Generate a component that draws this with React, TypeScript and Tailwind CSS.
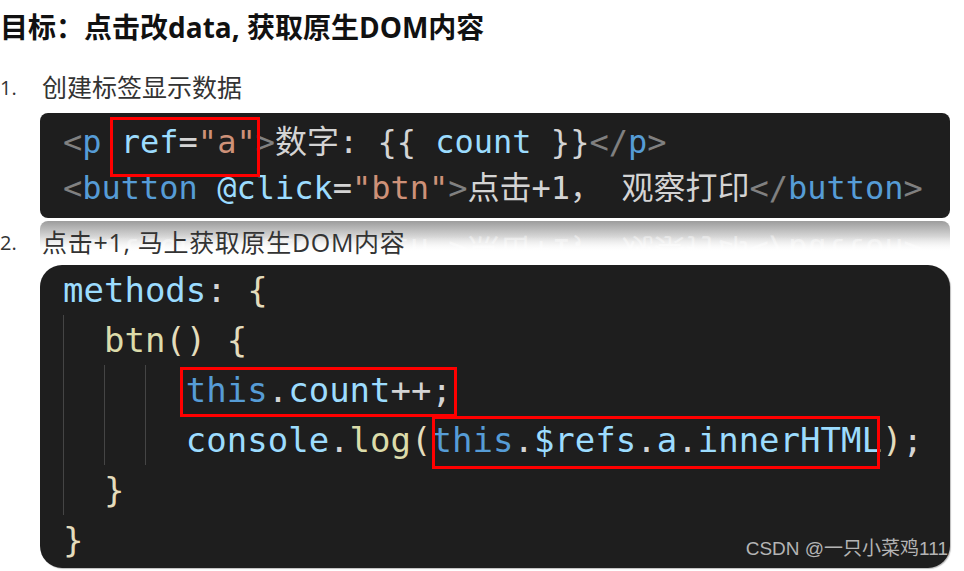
import React from "react";

const mono = "font-['DejaVu_Sans_Mono','Noto_Sans_CJK_SC',monospace]";
const sans = "font-['Open_Sans','Noto_Sans_CJK_SC',sans-serif]";

const Guide = () => (
  <span className="inline-block w-[2ch] h-[50px] align-top border-l border-[#454545]" />
);

const Box = ({ className }: { className: string }) => (
  <div className={`absolute border-[3px] border-[#ff0000] ${className}`} />
);

const TemplateLine2 = () => (
  <>
    <span className="text-[#808080]">&lt;</span>
    <span className="text-[#569cd6]">button</span>{" "}
    <span className="text-[#9cdcfe]">@click</span>
    <span className="text-[#d4d4d4]">=</span>
    <span className="text-[#ce9178]">"btn"</span>
    <span className="text-[#808080]">&gt;</span>
    <span className="text-[#d4d4d4]">点击+1， 观察打印</span>
    <span className="text-[#808080]">&lt;/</span>
    <span className="text-[#569cd6]">button</span>
    <span className="text-[#808080]">&gt;</span>
  </>
);

export const TemplateBlock = () => {
  return (
    <div className={`relative ml-[40px] w-[910px] h-[105px] rounded-[8px] bg-[#1e1e1e] pl-[23px] pt-[6px] text-[32px] leading-[46px] whitespace-pre ${mono}`}>
      <div>
        <span className="text-[#808080]">&lt;</span>
        <span className="text-[#569cd6]">p</span>{" "}
        <span className="text-[#9cdcfe]">ref</span>
        <span className="text-[#d4d4d4]">=</span>
        <span className="text-[#ce9178]">"a"</span>
        <span className="text-[#808080]">&gt;</span>
        <span className="text-[#d4d4d4]">数字: {"{{ "}</span>
        <span className="text-[#9cdcfe]">count</span>
        <span className="text-[#d4d4d4]">{" }}"}</span>
        <span className="text-[#808080]">&lt;/</span>
        <span className="text-[#569cd6]">p</span>
        <span className="text-[#808080]">&gt;</span>
      </div>
      <div>
        <TemplateLine2 />
      </div>
      <Box className="left-[70px] top-[4px] w-[150px] h-[60px]" />
    </div>
  );
};

export const MethodsBlock = () => {
  const brace = "text-[#e4dcbc]";
  return (
    <div className={`relative ml-[40px] w-[910px] h-[303px] rounded-[22px] bg-[#1e1e1e] pl-[23px] text-[34px] leading-[50px] whitespace-pre shadow-[1px_1px_1px_#bdbdbd] ${mono}`}>
      <div>
        <span className="text-[#9cdcfe]">methods</span>
        <span className="text-[#d4d4d4]">: </span>
        <span className={brace}>{"{"}</span>
      </div>
      <div>
        <Guide />
        <span className="text-[#dcdcaa]">btn</span>
        <span className={brace}>() {"{"}</span>
      </div>
      <div>
        <Guide />
        <Guide />
        <Guide />
        <span className="text-[#569cd6]">this</span>
        <span className="text-[#d4d4d4]">.</span>
        <span className="text-[#9cdcfe]">count</span>
        <span className="text-[#d4d4d4]">++;</span>
      </div>
      <div>
        <Guide />
        <Guide />
        <Guide />
        <span className="text-[#9cdcfe]">console</span>
        <span className="text-[#d4d4d4]">.</span>
        <span className="text-[#dcdcaa]">log</span>
        <span className={brace}>(</span>
        <span className="text-[#569cd6]">this</span>
        <span className="text-[#d4d4d4]">.</span>
        <span className="text-[#9cdcfe]">$refs</span>
        <span className="text-[#d4d4d4]">.</span>
        <span className="text-[#9cdcfe]">a</span>
        <span className="text-[#d4d4d4]">.</span>
        <span className="text-[#9cdcfe]">innerHTML</span>
        <span className={brace}>)</span>
        <span className="text-[#d4d4d4]">;</span>
      </div>
      <div>
        <Guide />
        <span className={brace}>{"}"}</span>
      </div>
      <div>
        <span className={brace}>{"}"}</span>
      </div>
      <Box className="left-[140px] top-[102px] w-[277px] h-[50px]" />
      <Box className="left-[392px] top-[151px] w-[448px] h-[53px]" />
      <div className="absolute right-[2px] bottom-[8px] text-[19px] leading-[22px] text-[#b4b4b4] font-['Liberation_Sans','Noto_Sans_CJK_SC',sans-serif]">
        CSDN @一只小菜鸡111
      </div>
    </div>
  );
};

const ListItem = ({
  n,
  children,
  className = "",
}: {
  n: string;
  children: React.ReactNode;
  className?: string;
}) => (
  <div className={`relative flex items-center h-[34px] text-[#333] ${sans}`}>
    <span className="w-[42px] text-[20px]">{n}</span>
    <span className={`text-[25px] ${className}`}>{children}</span>
  </div>
);

export default function App() {
  return (
    <div className="w-[964px] h-[571px] bg-white overflow-hidden">
      <h1 className={`pt-[9px] pl-0 text-[28px] leading-[36px] font-bold text-[#111] ${sans}`}>
        目标：点击改data, 获取原生DOM内容
      </h1>
      <div className="mt-[26px]">
        <ListItem n="1.">创建标签显示数据</ListItem>
      </div>
      <div className="mt-[8px]">
        <TemplateBlock />
      </div>
      <div className="relative h-[47px] pt-[8px]">
        <div className="absolute left-[40px] top-[3px] w-[910px] h-[31px] overflow-hidden rounded-t-[8px] bg-gradient-to-b from-[#9c9c9c] via-[#d6d6d6] to-white">
          <div className={`absolute left-[23px] top-[6px] h-[46px] -scale-y-100 opacity-40 text-[32px] leading-[46px] whitespace-pre ${mono}`}>
            <span className="text-white">&lt;button @click="btn"&gt;点击+1， 观察打印&lt;/button&gt;</span>
          </div>
          <div className="absolute inset-0 bg-gradient-to-b from-transparent via-transparent to-white" />
        </div>
        <ListItem n="2." className="tracking-[0.7px]">
          点击+1, 马上获取原生DOM内容
        </ListItem>
      </div>
      <MethodsBlock />
    </div>
  );
}
